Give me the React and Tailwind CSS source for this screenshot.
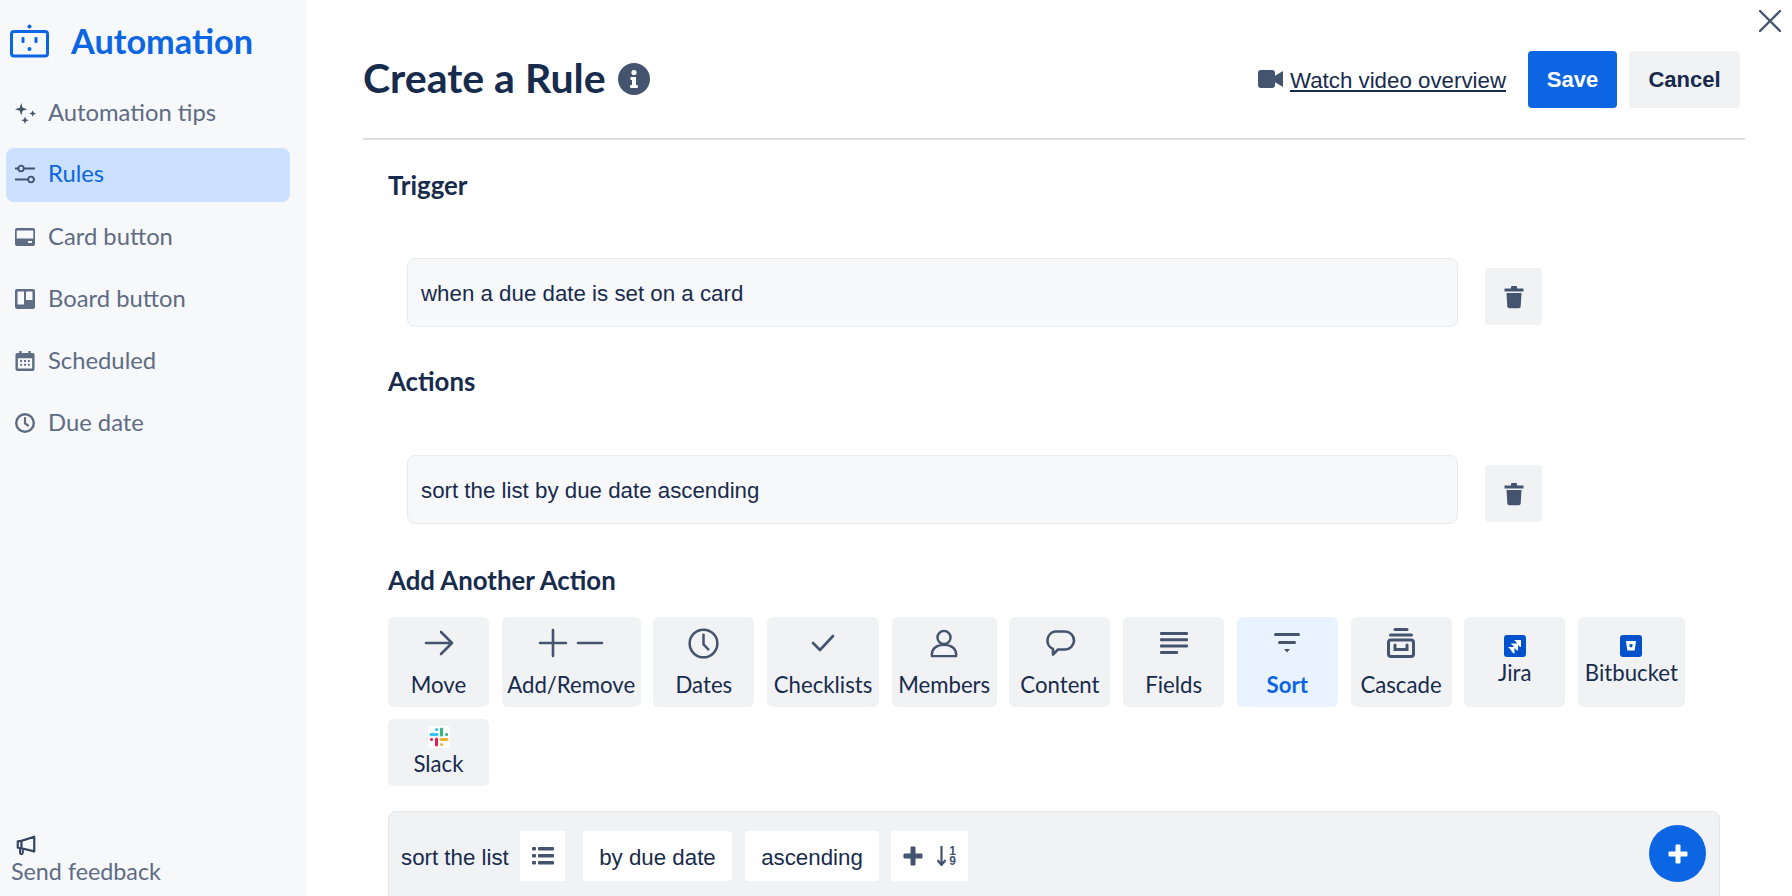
import React from "react";

const C = "#44546f";
const G = "#5e6c84";
const Svg = ({ s = 20, w, h, vb = "0 0 24 24", children, className = "" }) => (
  <svg width={w ?? s} height={h ?? s} viewBox={vb} fill="none" className={className}>{children}</svg>
);

const Robot = () => (
  <svg width="40" height="34" viewBox="0 0 40 34" fill="none">
    <circle cx="19.5" cy="2.5" r="2" fill="#0c66e4" />
    <rect x="1.5" y="7.5" width="36" height="24.5" rx="2.5" stroke="#0c66e4" strokeWidth="3" />
    <rect x="11.5" y="13" width="3" height="6" rx="1" fill="#0c66e4" />
    <rect x="24.5" y="13" width="3" height="6" rx="1" fill="#0c66e4" />
    <circle cx="19.5" cy="25" r="2" fill="#0c66e4" />
  </svg>
);
const Sparkles = () => (
  <Svg s={23} className="-ml-[1px] shrink-0">
    <path d="M7.5 1 9 6 14 7.5 9 9 7.5 14 6 9 1 7.5 6 6Z" fill={C} />
    <path d="M19.5 8.500 20.500 11 23 12 20.500 13 19.500 15.500 18.500 13 16 12 18.500 11Z" fill={C} />
    <path d="M11.500 15 12.600 17.900 15.500 19 12.600 20.100 11.500 23 10.400 20.100 7.500 19 10.400 17.900Z" fill={C} />
  </Svg>
);
const Sliders = () => (
  <Svg s={20} vb="2 2 20 20" className="shrink-0">
    <path d="M2.500 6.500h3M11 6.500h10.500M2.500 17.500h12.500M21 17.500h.5" stroke={C} strokeWidth="2" strokeLinecap="round" />
    <circle cx="8" cy="6.500" r="2.800" stroke={C} strokeWidth="1.800" />
    <circle cx="18" cy="17.500" r="2.800" stroke={C} strokeWidth="1.800" />
  </Svg>
);
const CardBtn = () => (
  <Svg s={20} vb="2 2 20 20" className="shrink-0">
    <path fillRule="evenodd" clipRule="evenodd" d="M4 3h16a2 2 0 0 1 2 2v14a2 2 0 0 1-2 2H4a2 2 0 0 1-2-2V5a2 2 0 0 1 2-2Zm-.300 2.500V13.500h16.600V5.500Z M15 16v2h4v-2Z" fill={G} />
  </Svg>
);
const BoardBtn = () => (
  <Svg s={20} vb="2 2 20 20" className="shrink-0">
    <path fillRule="evenodd" clipRule="evenodd" d="M4 2h16a2 2 0 0 1 2 2v16a2 2 0 0 1-2 2H4a2 2 0 0 1-2-2V4a2 2 0 0 1 2-2Zm.500 2.500v13h6.500v-13Zm8.500 0v8.500h6.500v-8.500Z" fill={G} />
  </Svg>
);
const Calendar = () => (
  <Svg s={20} vb="2 1 20 21" className="shrink-0">
    <path fillRule="evenodd" clipRule="evenodd" d="M6 1h2.500v2h7V1H18v2h2a2 2 0 0 1 2 2v15a2 2 0 0 1-2 2H4a2 2 0 0 1-2-2V5a2 2 0 0 1 2-2h2Zm-1.500 7.500V19.500h15V8.500Z" fill={G} />
    <path d="M7 10.500h2v2H7zM11 10.500h2v2h-2zM15 10.500h2v2h-2zM7 14.500h2v2H7zM11 14.500h2v2h-2zM15 14.500h2v2h-2z" fill={G} />
  </Svg>
);
const ClockSmall = () => (
  <Svg s={20} vb="2 2 20 20" className="shrink-0">
    <circle cx="12" cy="12" r="8.800" stroke={G} strokeWidth="2.400" />
    <path d="M12 7v5.500l3 2" stroke={G} strokeWidth="2.200" strokeLinecap="round" />
  </Svg>
);
const Megaphone = () => (
  <Svg s={22}>
    <path d="M21 3v16L7 15.500V7.500Z M3 8l4-.5v8l-4-.5Z" stroke="#344563" strokeWidth="2.400" strokeLinejoin="round" />
    <path d="M5.500 15.500V20.500a1.500 1.500 0 0 0 3 0V16" stroke="#344563" strokeWidth="2.200" />
  </Svg>
);
const Info = () => (
  <svg width="32" height="32" viewBox="0 0 32 32">
    <circle cx="16" cy="16" r="16" fill={C} />
    <circle cx="16" cy="9.500" r="2.600" fill="#fff" />
    <path d="M12.500 14h5.500v8h1.800v3h-7.600v-3H14v-5h-1.500Z" fill="#fff" />
  </svg>
);
const Video = () => (
  <svg width="25" height="18" viewBox="0 0 25 18">
    <rect x="0" y="0" width="17" height="18" rx="3" fill={C} />
    <path d="M15 7 25 1v16L15 11Z" fill={C} />
  </svg>
);
const Trash = () => (
  <svg width="20" height="24" viewBox="0 0 20 24">
    <path d="M0.500 3.500h6.500V2a1 1 0 0 1 1-1h4a1 1 0 0 1 1 1v1.500h6.500v3H0.500Z" fill={C} />
    <path d="M2.500 8h15l-.8 13.500a2 2 0 0 1-2 1.800H5.300a2 2 0 0 1-2-1.800Z" fill={C} />
  </svg>
);

const ST = { stroke: C, strokeWidth: 2.6, strokeLinecap: "round", strokeLinejoin: "round" };
const Arrow = () => (
  <Svg w={30} h={28} vb="0 0 30 28"><path d="M2 14h26M17 3l11 11-11 11" {...ST} /></Svg>
);
const AddRemove = () => (
  <Svg w={66} h={30} vb="0 0 66 30"><path d="M2 15h26M15 2v26M40 15h24" {...ST} /></Svg>
);
const Clock = () => (
  <Svg s={31} vb="0 0 32 32">
    <circle cx="16" cy="16" r="14.300" {...ST} />
    <path d="M16 7v10l5 5" {...ST} />
  </Svg>
);
const Check = () => (
  <Svg w={24} h={18} vb="0 0 24 18"><path d="M2 9l7 7L22 2" {...ST} /></Svg>
);
const Person = () => (
  <Svg w={28} h={29} vb="0 0 30 31">
    <circle cx="15" cy="9" r="7" {...ST} />
    <path d="M2 29v-2c0-6 5-10 13-10s13 4 13 10v2Z" {...ST} />
  </Svg>
);
const Bubble = () => (
  <Svg w={32} h={27} vb="0 0 32 27">
    <path d="M11 1.500h10a9 9 0 0 1 0 18h-7l-5 5v-5.500A9.200 9.200 0 0 1 11 1.500Z" {...ST} />
  </Svg>
);
const Lines = () => (
  <svg width="28" height="22" viewBox="0 0 28 22">
    <rect y="0" width="28" height="3" rx="1" fill={C} />
    <rect y="6.300" width="28" height="3" rx="1" fill={C} />
    <rect y="12.600" width="28" height="3" rx="1" fill={C} />
    <rect y="19" width="18" height="3" rx="1" fill={C} />
  </svg>
);
const Filter = () => (
  <svg width="26" height="20" viewBox="0 0 26 20">
    <rect y="0" width="26" height="3" rx="1.500" fill={C} />
    <rect x="4" y="8" width="18" height="3" rx="1.500" fill={C} />
    <path d="M10 16h6l-3 3.500Z" fill={C} />
  </svg>
);
const Archive = () => (
  <Svg w={28} h={30} vb="0 0 28 30">
    <path d="M8 1.500h12" stroke={C} strokeWidth="3" strokeLinecap="round" />
    <path d="M3.500 7h21" stroke={C} strokeWidth="3" strokeLinecap="round" />
    <rect x="1.500" y="12" width="25" height="16.500" rx="2.500" stroke={C} strokeWidth="3" />
    <path d="M8 17v4.500h12V17" stroke={C} strokeWidth="3" strokeLinecap="round" />
  </Svg>
);
const Jira = () => (
  <svg width="22" height="22" viewBox="0 0 22 22">
    <rect width="22" height="22" rx="3" fill="#0052cc" />
    <path d="M10 5h7v7c-3 0-3-4-7-7ZM6.500 8.500h7.500v7c-3 0-3-4-7.500-7ZM4 12h6.500v6.500C8 18.500 8 15 4 12Z" fill="#fff" />
  </svg>
);
const Bitbucket = () => (
  <svg width="22" height="22" viewBox="0 0 22 22">
    <rect width="22" height="22" rx="3" fill="#0052cc" />
    <path d="M6 6h10l-1.300 9.500H7.300ZM9.300 9.300l.4 3h2.600l.4-3Z" fill="#fff" fillRule="evenodd" />
  </svg>
);
const Slack = () => (
  <svg width="22" height="22" viewBox="0 0 22 22">
    <rect width="22" height="22" rx="3" fill="#fff" />
    <path d="M3 8.500h6" stroke="#36c5f0" strokeWidth="3" strokeLinecap="round" />
    <path d="M8.500 3.500h.4" stroke="#36c5f0" strokeWidth="3" strokeLinecap="round" />
    <path d="M13.500 3v6" stroke="#2eb67d" strokeWidth="3" strokeLinecap="round" />
    <path d="M18.500 8.500h.1" stroke="#2eb67d" strokeWidth="3" strokeLinecap="round" />
    <path d="M8.500 13v6" stroke="#e01e5a" strokeWidth="3" strokeLinecap="round" />
    <path d="M3.500 13.500h.1" stroke="#e01e5a" strokeWidth="3" strokeLinecap="round" />
    <path d="M13 13.500h6" stroke="#ecb22e" strokeWidth="3" strokeLinecap="round" />
    <path d="M13.500 18.500h.1" stroke="#ecb22e" strokeWidth="3" strokeLinecap="round" />
  </svg>
);
const ListIcon = () => (
  <svg width="22" height="18" viewBox="0 0 22 18">
    <rect y="0" width="4" height="3.500" rx="1" fill={C} /><rect x="6" y="0" width="16" height="3.500" rx="1" fill={C} />
    <rect y="7" width="4" height="3.500" rx="1" fill={C} /><rect x="6" y="7" width="16" height="3.500" rx="1" fill={C} />
    <rect y="14" width="4" height="3.500" rx="1" fill={C} /><rect x="6" y="14" width="16" height="3.500" rx="1" fill={C} />
  </svg>
);
const Plus = ({ color = C, s = 20 }) => (
  <svg width={s} height={s} viewBox="0 0 20 20"><path d="M7.500 1.500a1 1 0 0 1 1-1h3a1 1 0 0 1 1 1v6h6a1 1 0 0 1 1 1v3a1 1 0 0 1-1 1h-6v6a1 1 0 0 1-1 1h-3a1 1 0 0 1-1-1v-6h-6a1 1 0 0 1-1-1v-3a1 1 0 0 1 1-1h6Z" fill={color} /></svg>
);
const SortNum = () => (
  <span className="flex items-center gap-[3px]">
    <svg width="9" height="20" viewBox="0 0 9 20">
      <path d="M4.500 0v18M0.500 14l4 5 4-5" stroke={C} strokeWidth="2.200" fill="none" />
    </svg>
    <span className="flex flex-col font-bold text-[12px] leading-[10.500px] text-[#44546f]">
      <span>1</span>
      <span>9</span>
    </span>
  </span>
);
const CloseX = () => (
  <svg width="22" height="22" viewBox="0 0 22 22"><path d="M1 1l20 20M21 1L1 21" stroke={C} strokeWidth="2.400" strokeLinecap="round" /></svg>
);

const nav = [
  ["Automation tips", <Sparkles />],
  ["Rules", <Sliders />, true],
  ["Card button", <CardBtn />],
  ["Board button", <BoardBtn />],
  ["Scheduled", <Calendar />],
  ["Due date", <ClockSmall />],
];

const actions = [
  ["Move", <Arrow />, "", "w-[101px]"],
  ["Add/Remove", <AddRemove />, "", "w-[139px]"],
  ["Dates", <Clock />, "", "w-[101px]"],
  ["Checklists", <Check />, "", "w-[112px]"],
  ["Members", <Person />, "", "w-[105px]"],
  ["Content", <Bubble />, "", "w-[101px]"],
  ["Fields", <Lines />, "", "w-[101px]"],
  ["Sort", <Filter />, "active", "w-[101px]"],
  ["Cascade", <Archive />, "", "w-[101px]"],
  ["Jira", <Jira />, "logo", "w-[101px]"],
  ["Bitbucket", <Bitbucket />, "logo", "w-[107px]"],
  ["Slack", <Slack />, "logo", "w-[101px]"],
];

const Heading = ({ children, className = "" }) => (
  <h2 className={"font-['Lato',sans-serif] font-bold text-[25.800px] leading-[30px] text-[#172b4d] " + className}>{children}</h2>
);

const RuleRow = ({ text, className = "" }) => (
  <div className={"flex items-start ml-[19px] gap-[27px] " + className}>
    <div className="w-[1051px] h-[69px] flex items-center px-[13px] pt-[2px] bg-[#f7f8f9] border border-[#e8eaee] rounded-[8px] text-[22.300px] text-[#172b4d] font-['Liberation_Sans',sans-serif]">{text}</div>
    <button className="mt-[10px] w-[57px] h-[57px] rounded-[4px] bg-[#f1f2f4] flex items-center justify-center"><Trash /></button>
  </div>
);

export default function App() {
  return (
    <div className="relative flex w-[1792px] h-[896px] overflow-hidden bg-white text-[#172b4d]">
      <aside className="w-[306px] shrink-0 bg-[#f7f8fa] flex flex-col justify-between font-['Lato',sans-serif]">
        <div>
          <div className="flex items-center h-[85px] pl-[10px] pb-[3px] gap-[21px]">
            <Robot />
            <span className="text-[34.300px] font-bold text-[#0c66e4]">Automation</span>
          </div>
          <nav className="flex flex-col gap-[8px] ml-[6px] mr-[16px]">
            {nav.map(([label, icon, active]) => (
              <div key={label} className={"flex items-center h-[54px] pl-[9px] pt-[2px] gap-[13px] rounded-[8px] text-[23.800px] " + (active ? "mt-[1px] -mb-[1px] pb-[5px] bg-[#cce0ff] text-[#0c66e4]" : "text-[#5e6c84]")}>
                <span className="flex w-[20px] shrink-0">{icon}</span>
                {label}
              </div>
            ))}
          </nav>
        </div>
        <div className="pl-[11px] pb-[10px] text-[23.300px] leading-[30px] text-[#5e6c84]">
          <div className="pl-[4px] flex"><Megaphone /></div>
          Send feedback
        </div>
      </aside>

      <main className="w-[1439px] pl-[57px]">
        <header className="flex items-center justify-between h-[140px] pt-[51px] pb-[31px] pr-[5px] border-b-2 border-[#dcdfe4]">
          <div className="flex items-center gap-[12px]">
            <h1 className="pb-[2px] font-['Lato',sans-serif] font-bold text-[41px] text-[#172b4d]">Create a Rule</h1>
            <Info />
          </div>
          <div className="flex items-center font-['Liberation_Sans',sans-serif] text-[22px]">
            <Video />
            <a className="ml-[7px] mr-[22px] pt-[4px] text-[22.300px] underline text-[#172b4d]">Watch video overview</a>
            <button className="w-[89px] h-[57px] rounded-[4px] bg-[#0c66e4] text-white font-bold">Save</button>
            <button className="ml-[12px] w-[111px] h-[57px] rounded-[4px] bg-[#f1f2f4] text-[#172b4d] font-bold">Cancel</button>
          </div>
        </header>

        <section className="pl-[25px]">
          <Heading className="mt-[30px]">Trigger</Heading>
          <RuleRow className="mt-[58px]" text="when a due date is set on a card" />
          <Heading className="mt-[39px]">Actions</Heading>
          <RuleRow className="mt-[59px]" text="sort the list by due date ascending" />
          <Heading className="mt-[41px]">Add Another Action</Heading>

          <div className="mt-[22px] w-[1332px] flex flex-wrap gap-x-[12.700px] gap-y-[12px] font-['Lato',sans-serif] text-[22.200px]">
            {actions.map(([label, icon, kind, width]) => (
              <button key={label} className={width + " rounded-[6px] flex flex-col items-center justify-center " + (kind === "logo" ? "py-[6.500px] " : "pb-[6px] ") + (kind === "active" ? "bg-[#e9f2ff] text-[#0c66e4] font-bold" : "bg-[#f1f2f4] text-[#172b4d]")}>
                <span className={"flex items-center justify-center " + (kind === "logo" ? "h-[22px]" : "h-[52px]")}>{icon}</span>
                <span className="leading-[32px] whitespace-nowrap">{label}</span>
              </button>
            ))}
          </div>

          <div className="mt-[25px] w-[1332px] h-[120px] pt-[19px] pl-[12px] pr-[13px] flex items-start justify-between bg-[#f1f2f4] border border-[#e4e6ea] rounded-[8px] font-['Liberation_Sans',sans-serif] text-[22.300px]">
            <div className="flex items-center h-[50px]">
              <span className="w-[106px] pt-[3px] whitespace-nowrap">sort the list</span>
              <span className="ml-[13px] w-[45px] h-[50px] bg-white flex items-center justify-center"><ListIcon /></span>
              <span className="ml-[18px] w-[149px] h-[50px] pt-[3px] bg-white rounded-[4px] flex items-center justify-center">by due date</span>
              <span className="ml-[13px] w-[134px] h-[50px] pt-[3px] bg-white rounded-[4px] flex items-center justify-center">ascending</span>
              <span className="ml-[12px] w-[77px] h-[50px] bg-white rounded-[2px] flex items-center justify-center gap-[14px]"><Plus /><SortNum /></span>
            </div>
            <button className="-mt-[6px] w-[57px] h-[57px] rounded-full bg-[#0c66e4] flex items-center justify-center"><Plus color="#fff" /></button>
          </div>
        </section>
      </main>

      <button className="absolute left-[1759px] top-[10px]"><CloseX /></button>
    </div>
  );
}
